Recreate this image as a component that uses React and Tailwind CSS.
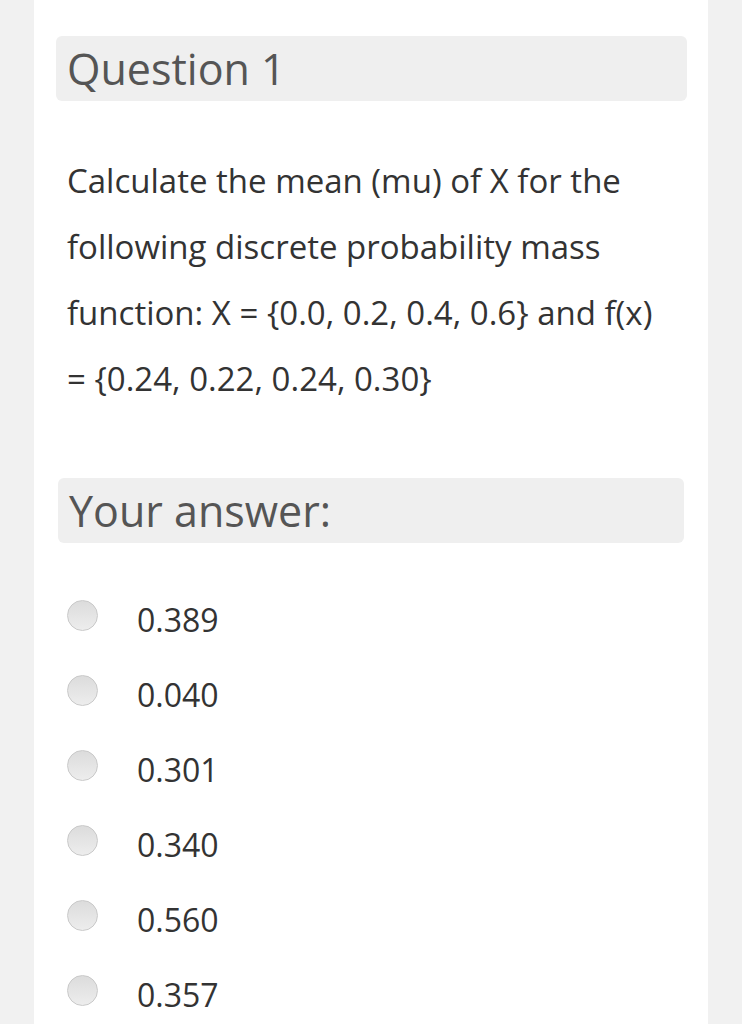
export default function App() {
    const options = ['0.389', '0.040', '0.301', '0.340', '0.560', '0.357']

    return (
        <div className="min-h-screen bg-[#f1f1f1] font-['Open_Sans',sans-serif]">
            <div className="ml-[34px] w-[674px] min-h-[1024px] bg-white pt-[36px]">
                {/* Question header */}
                <div className="ml-[22px] mr-[21px] h-[65px] rounded-md bg-[#efefef] pl-[11px] flex items-center">
                    <h2 className="text-[43px] leading-none text-[#555] font-normal">Question 1</h2>
                </div>

                <p className="mt-[47px] pl-[33px] pr-[50px] text-[33px] leading-[66px] text-[#333]">
                    Calculate the mean (mu) of X for the following discrete probability mass function: X = {'{'}0.0, 0.2, 0.4, 0.6{'}'} and f(x) = {'{'}0.24, 0.22, 0.24, 0.30{'}'}
                </p>

                {/* Answer header */}
                <div className="mt-[66px] mx-[24px] h-[65px] rounded-md bg-[#efefef] pl-[11px] flex items-center">
                    <h3 className="text-[43px] leading-none text-[#555] font-normal">Your answer:</h3>
                </div>

                <div className="mt-[35px] flex flex-col">
                    {options.map((opt) => (
                        <label key={opt} className="h-[75px] flex items-center pl-[33px]">
                            <span className="w-[31px] h-[31px] rounded-full border border-[#c9c9c9] bg-gradient-to-b from-[#dcdcdc] to-[#ededed] shrink-0" />
                            <span className="ml-[39px] mt-[8px] text-[32px] text-[#333] leading-none">{opt}</span>
                        </label>
                    ))}
                </div>
            </div>
        </div>
    )
}
